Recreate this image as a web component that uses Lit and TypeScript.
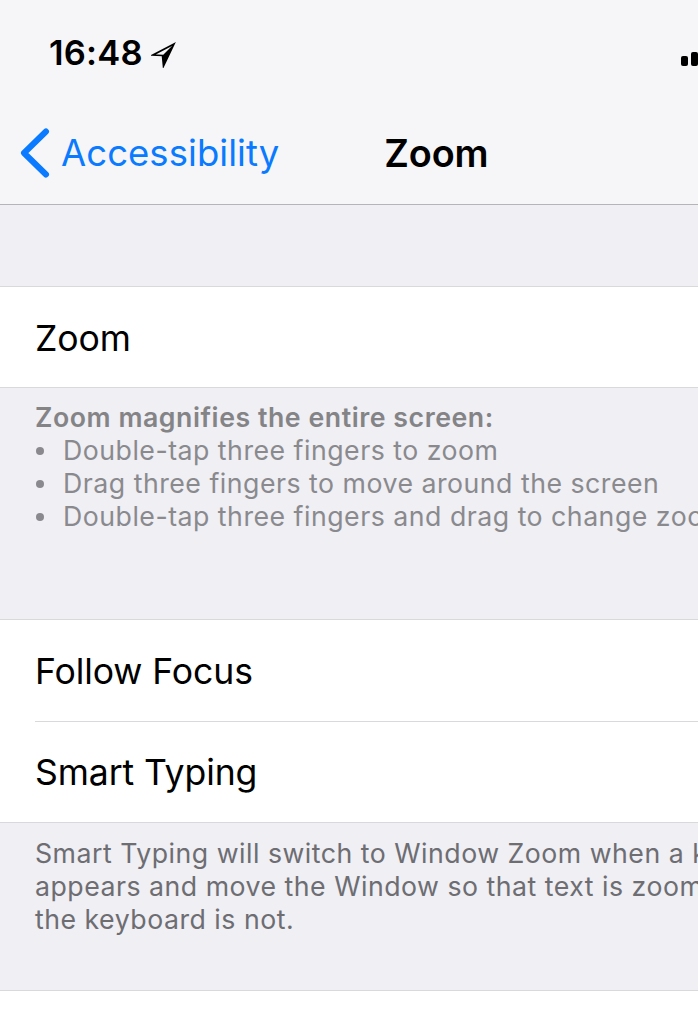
import { LitElement, html, css } from "lit";
import { customElement } from "lit/decorators.js";

@customElement("app-root")
export class AppRoot extends LitElement {
  static styles = css`
    :host {
      display: block;
      width: 698px;
      height: 1024px;
      overflow: hidden;
      background: #efeff4;
      font-family: Inter, "Liberation Sans", sans-serif;
      color: #000;
    }
    .header {
      height: 204px;
      background: #f6f6f8;
      border-bottom: 1px solid #b5b5b7;
      display: flex;
      flex-direction: column;
    }
    .status {
      height: 123px;
      padding: 34px 0 0 49px;
      box-sizing: border-box;
      display: flex;
      align-items: flex-start;
    }
    .time {
      font-size: 34.5px;
      line-height: 38px;
      font-weight: 600;
      letter-spacing: 0.2px;
      width: 102px;
    }
    .loc { margin: 8px 0 0 0; }
    .signal {
      margin: 17px 0 0 auto;
      display: flex;
      align-items: flex-end;
      gap: 3px;
      height: 15px;
    }
    .bar { width: 7px; background: #000; border-radius: 2px; }
    .b1 { height: 10px; }
    .b2 { height: 14px; }
    .nav { display: flex; align-items: center; height: 60px; }
    .back { margin-left: 20px; display: block; }
    .back-label {
      color: #0a7aff;
      font-size: 36.5px;
      line-height: 44px;
      margin-left: 11px;
      letter-spacing: 0.05px;
    }
    .title {
      margin-left: 105px;
      font-size: 37.8px;
      line-height: 44px;
      font-weight: 600;
      letter-spacing: -0.1px;
    }
    .gap { height: 81px; }
    .group {
      background: #fff;
      border-top: 1px solid #d9d9dc;
      border-bottom: 1px solid #d9d9dc;
    }
    .row {
      height: 100px;
      display: flex;
      align-items: center;
      box-sizing: border-box;
      padding: 2px 0 0 35px;
      font-size: 35.6px;
      letter-spacing: -0.1px;
      white-space: nowrap;
    }
    .group.pair .row { height: 101px; }
    .group.pair .row + .row { position: relative; }
    .group.pair .row + .row::before {
      content: "";
      position: absolute;
      left: 35px;
      right: 0;
      top: 0;
      height: 1px;
      background: #d9d9dc;
    }
    .note {
      box-sizing: border-box;
      padding-left: 35px;
      font-size: 26.7px;
      line-height: 33px;
      letter-spacing: 0.5px;
      white-space: nowrap;
      overflow: hidden;
    }
    .zoom-note { height: 231px; padding-top: 13px; color: #8a8a8e; }
    .zoom-note b { font-weight: 600; display: block; letter-spacing: 0.55px; color: #848487; }
    .bullet { display: flex; }
    .dot { width: 28px; flex: none; display: flex; align-items: center; }
    .dot i { width: 8px; height: 8px; margin-left: 1px; border-radius: 50%; background: #8a8a8e; }
    .smart-note { height: 167px; padding-top: 14px; color: #6d6d72; }
    .last { border-bottom: none; height: 40px; }
  `;

  render() {
    const bullets = [
      "Double-tap three fingers to zoom",
      "Drag three fingers to move around the screen",
      "Double-tap three fingers and drag to change zoom",
    ];
    return html`
      <div class="header">
        <div class="status">
          <span class="time">16:48</span>
          <svg class="loc" width="25" height="26" viewBox="0 0 25 26">
            <path d="M23 2 L2 13 L11.5 13.5 L12.5 24 Z" fill="none" stroke="#000" stroke-width="1.7" stroke-linejoin="miter"/>
            <path d="M23 2 L11.5 13.5 L12.5 24 Z" fill="#000"/>
          </svg>
          <span class="signal"><span class="bar b1"></span><span class="bar b2"></span></span>
        </div>
        <div class="nav">
          <svg class="back" width="30" height="50" viewBox="0 0 30 50">
            <path d="M26 3.5 L4 25 L26 46.5" fill="none" stroke="#0a7aff" stroke-width="6" stroke-linecap="round" stroke-linejoin="round"/>
          </svg>
          <span class="back-label">Accessibility</span>
          <span class="title">Zoom</span>
        </div>
      </div>
      <div class="gap"></div>
      <div class="group"><div class="row">Zoom</div></div>
      <div class="note zoom-note">
        <b>Zoom magnifies the entire screen:</b>
        ${bullets.map(
          (t) => html`<div class="bullet"><span class="dot"><i></i></span><span>${t}</span></div>`
        )}
      </div>
      <div class="group pair">
        <div class="row">Follow Focus</div>
        <div class="row">Smart Typing</div>
      </div>
      <div class="note smart-note">
        Smart Typing will switch to Window Zoom when a keyboard<br />
        appears and move the Window so that text is zoomed but<br />
        the keyboard is not.
      </div>
      <div class="group last"></div>
    `;
  }
}
